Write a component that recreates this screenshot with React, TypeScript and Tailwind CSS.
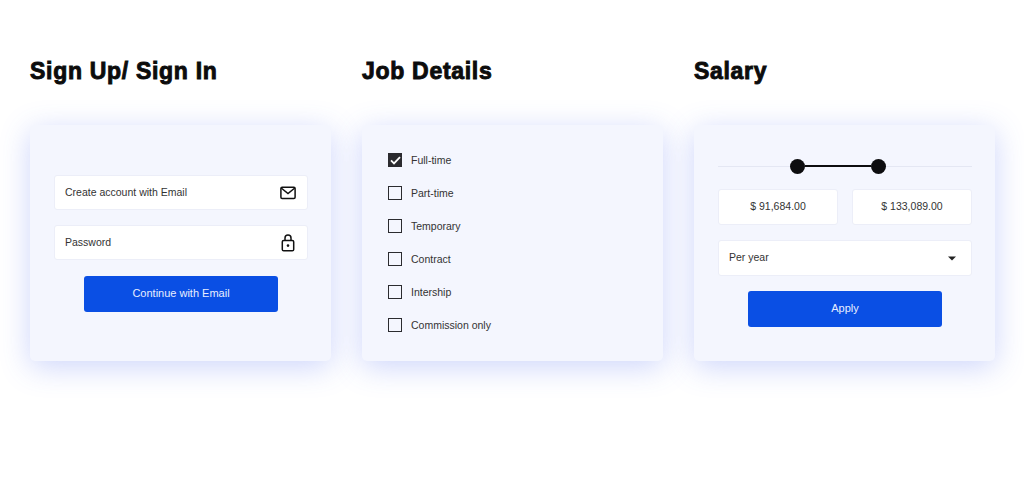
import React from 'react';

const font = "font-['Liberation_Sans',sans-serif]";

const MailIcon = () => (
  <svg width="16" height="14" viewBox="0 0 16 14" fill="none" stroke="#111" strokeWidth="1.5">
    <rect x="0.9" y="1.2" width="14.2" height="11.3" rx="1.2" />
    <path d="M1.2 2 L8 7.6 L14.8 2" />
  </svg>
);

const LockIcon = () => (
  <svg width="14" height="18" viewBox="0 0 14 18" fill="none" stroke="#111" strokeWidth="1.5">
    <rect x="1.3" y="6.4" width="11.4" height="10.4" rx="1.4" />
    <path d="M4 6.4 V4 a3 3 0 0 1 6 0 V6.4" />
    <circle cx="7" cy="11.6" r="1.3" fill="#111" stroke="none" />
  </svg>
);

const TextField = ({ label, icon }: { label: string; icon: React.ReactNode }) => (
  <div className="flex h-[35px] items-center justify-between rounded-[3px] border border-[#eceef8] bg-white pl-[10px] pr-[10px]">
    <span className="text-[10.5px] text-[#333]">{label}</span>
    <span className="flex w-[18px] justify-center">{icon}</span>
  </div>
);

const PrimaryButton = ({ label }: { label: string }) => (
  <button className="flex h-[36px] w-[194px] items-center justify-center rounded-[3px] bg-[#0a4fe4] pb-px text-[11px] text-[#e8eeff]">
    {label}
  </button>
);

const Card = ({ title, children }: { title: string; children: React.ReactNode }) => (
  <section className="w-[301px]">
    <h2 className="h-[28px] text-[23px] leading-[28px] font-bold tracking-[0.7px] text-[#0c0c0c] [-webkit-text-stroke:0.9px_#0c0c0c]">
      {title}
    </h2>
    <div className="mt-[40px] h-[236px] rounded-[5px] bg-[#f4f6fe] shadow-[0_6px_30px_rgba(70,100,240,0.27)]">
      {children}
    </div>
  </section>
);

const jobTypes = ['Full-time', 'Part-time', 'Temporary', 'Contract', 'Intership', 'Commission only'];

const Checkbox = ({ checked }: { checked: boolean }) =>
  checked ? (
    <span className="flex h-[14px] w-[14px] items-center justify-center bg-[#2b2b2f]">
      <svg width="11" height="9" viewBox="0 0 11 9" fill="none" stroke="#fff" strokeWidth="1.8">
        <path d="M1 4.4 L4 7.4 L10 1.2" />
      </svg>
    </span>
  ) : (
    <span className="h-[14px] w-[14px] border-[1.5px] border-[#2b2b2f]" />
  );

const ValueBox = ({ value }: { value: string }) => (
  <div className="flex h-[36px] w-[120px] items-center justify-center rounded-[3px] border border-[#eceef8] bg-white text-[10.5px] text-[#333]">
    {value}
  </div>
);

export default function App() {
  return (
    <div className={`${font} flex h-[486px] w-[1024px] gap-[31px] overflow-hidden bg-white pl-[30px] pt-[57px]`}>
      <Card title="Sign Up/ Sign In">
        <div className="flex flex-col pl-[24px] pr-[23px] pt-[50px]">
          <TextField label="Create account with Email" icon={<MailIcon />} />
          <div className="mt-[15px] h-[36px]">
            <TextField label="Password" icon={<LockIcon />} />
          </div>
          <div className="mt-[15px] flex justify-center">
            <PrimaryButton label="Continue with Email" />
          </div>
        </div>
      </Card>

      <Card title="Job Details">
        <ul className="flex flex-col gap-[19px] pl-[26px] pt-[28px]">
          {jobTypes.map((job, i) => (
            <li key={job} className="flex h-[14px] items-center gap-[9px] text-[10.5px] text-[#333]">
              <Checkbox checked={i === 0} />
              <span className="pt-[2px]">{job}</span>
            </li>
          ))}
        </ul>
      </Card>

      <Card title="Salary">
        <div className="flex flex-col pl-[24px] pr-[23px] pt-[33px]">
          <div className="flex h-[16px] items-center">
            <span className="h-px w-[72px] bg-[#e4e7f3]" />
            <span className="h-[15px] w-[15px] rounded-full bg-[#0d0d0f]" />
            <span className="h-[1.5px] w-[66px] bg-[#0d0d0f]" />
            <span className="h-[15px] w-[15px] rounded-full bg-[#0d0d0f]" />
            <span className="h-px flex-1 bg-[#e4e7f3]" />
          </div>
          <div className="mt-[15px] flex justify-between">
            <ValueBox value="$ 91,684.00" />
            <ValueBox value="$ 133,089.00" />
          </div>
          <div className="mt-[15px] flex h-[36px] items-center justify-between rounded-[3px] border border-[#eceef8] bg-white pl-[10px] pr-[15px] text-[10.5px] text-[#333]">
            <span>Per year</span>
            <svg width="8" height="5" viewBox="0 0 8 5" fill="#222">
              <path d="M0 0.5 H8 L4 4.5 Z" />
            </svg>
          </div>
          <div className="mt-[15px] flex justify-center">
            <PrimaryButton label="Apply" />
          </div>
        </div>
      </Card>
    </div>
  );
}
